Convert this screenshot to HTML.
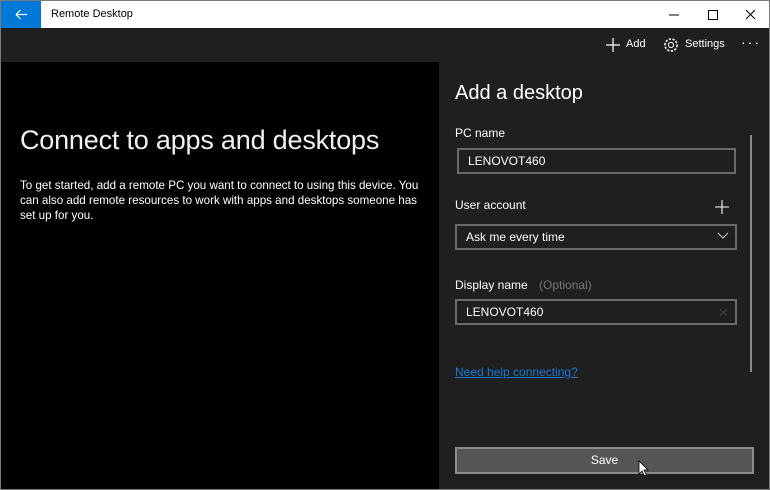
<!DOCTYPE html>
<html><head><meta charset="utf-8"><style>
*{margin:0;padding:0;box-sizing:border-box}
body{width:770px;height:490px;overflow:hidden;background:#1f1f1f;font-family:"Liberation Sans",sans-serif;position:relative}
.win{position:absolute;left:0;top:0;width:770px;height:490px;border:1px solid #7a7a7a;overflow:hidden;background:#1f1f1f}
.title{position:absolute;left:0;top:0;width:768px;height:27px;background:#fff}
.back{position:absolute;left:0;top:0;width:40px;height:27px;background:#0078d7}
.ttext{position:absolute;left:50px;top:7px;font-size:11px;color:#000}
.tb{position:absolute;top:27px;left:0;width:768px;height:34px;background:#1f1f1f}
.tbt{position:absolute;top:10px;color:#fff;font-size:11px}
.left{position:absolute;left:0;top:61px;width:438px;height:428px;background:#000}
h1{position:absolute;left:19px;top:124px;font-weight:300;font-size:27px;color:#f0f0f0;letter-spacing:-0.2px}
.p{position:absolute;left:19px;top:177px;width:412px;font-size:11.6px;line-height:15px;color:#fff}
.right{position:absolute;left:438px;top:61px;width:331px;height:428px;background:#1f1f1f}
.lbl{position:absolute;color:#fff;font-size:12px}
.box{position:absolute;border:2px solid #6a6a6a;background:#1f1f1f;color:#fff;font-size:12px;padding-left:9px;line-height:22px}
</style></head><body><div class="win">
<div class="title">
 <div class="back"><svg width="40" height="27"><path d="M15 13.5h11M15 13.5l4.5-4.5M15 13.5l4.5 4.5" stroke="#fff" stroke-width="1.2" fill="none"/></svg></div>
 <div class="ttext">Remote Desktop</div>
 <svg style="position:absolute;left:660px;top:0" width="108" height="27"><path d="M8 14h10" stroke="#000"/><rect x="47.5" y="9.5" width="9" height="9" stroke="#000" fill="none"/><path d="M85 9l9 9M94 9l-9 9" stroke="#000"/></svg>
</div>
<div class="tb">
 <svg style="position:absolute;left:604px;top:9px" width="16" height="16"><path d="M8 1v14M1 8h14" stroke="#fff" stroke-width="1.2"/></svg>
 <div class="tbt" style="left:625px">Add</div>
 <svg style="position:absolute;left:662px;top:9px" width="16" height="16"><circle cx="8" cy="8" r="2.6" stroke="#fff" fill="none"/><circle cx="8" cy="8" r="6" stroke="#fff" stroke-width="1.6" stroke-dasharray="2.2 1.5" fill="none"/></svg>
 <div class="tbt" style="left:684px">Settings</div>
 <div class="tbt" style="left:740px;top:6px;font-size:14px;letter-spacing:2px">···</div>
</div>
<div class="left"></div>
<h1>Connect to apps and desktops</h1>
<div class="p">To get started, add a remote PC you want to connect to using this device. You can also add remote resources to work with apps and desktops someone has set up for you.</div>
<div class="right"></div>
<div class="lbl" style="left:454px;top:81px;font-size:20px;font-weight:300">Add a desktop</div>
<div class="lbl" style="left:454px;top:125px">PC name</div>
<div class="box" style="left:456px;top:147px;width:279px;height:26px">LENOVOT460</div>
<div class="lbl" style="left:454px;top:197px">User account</div>
<svg style="position:absolute;left:714px;top:199px" width="14" height="14"><path d="M7 0v14M0 7h14" stroke="#fff" stroke-width="1.1"/></svg>
<div class="box" style="left:454px;top:223px;width:282px;height:26px">Ask me every time</div>
<svg style="position:absolute;left:716px;top:231px" width="12" height="8"><path d="M1 1l5 5 5-5" stroke="#ccc" fill="none"/></svg>
<div class="lbl" style="left:454px;top:277px">Display name <span style="color:#777;margin-left:8px">(Optional)</span></div>
<div class="box" style="left:454px;top:298px;width:282px;height:26px">LENOVOT460</div>
<svg style="position:absolute;left:718px;top:307px" width="9" height="9"><path d="M1 1l7 7M8 1l-7 7" stroke="#444"/></svg>
<div style="position:absolute;left:749px;top:134px;width:2px;height:237px;background:#8a8a8a"></div>
<div class="lbl" style="left:454px;top:364px;color:#1a7ad4;text-decoration:underline">Need help connecting?</div>
<div style="position:absolute;left:454px;top:446px;width:299px;height:27px;background:#555;border:2px solid #8c8c8c;color:#fff;font-size:12px;text-align:center;line-height:23px">Save</div>
<svg style="position:absolute;left:637px;top:459px" width="12" height="18"><path d="M1 1v13l3-3 2.5 5 2-1-2.5-5h4z" fill="#fff" stroke="#000" stroke-width="0.8"/></svg>
</div></body></html>
